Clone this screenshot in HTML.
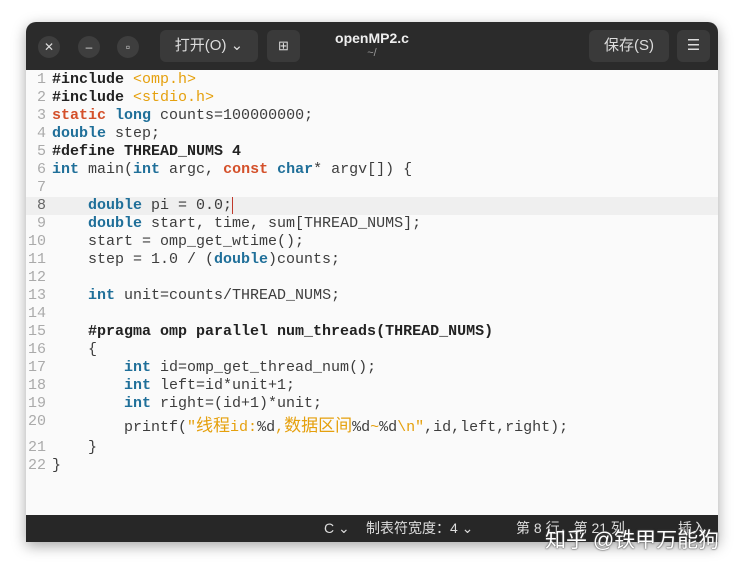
<!DOCTYPE html>
<html><head><meta charset="utf-8"><style>
body{margin:0;width:744px;height:571px;background:#fff;position:relative;overflow:hidden;font-family:"Liberation Sans","Noto Sans CJK SC",sans-serif}
.win{position:absolute;left:26px;top:22px;width:692px;height:520px;background:#fafafa;border-radius:10px 10px 0 0;overflow:hidden;box-shadow:0 4px 14px rgba(0,0,0,.35)}
.tb{position:absolute;left:0;top:0;width:692px;height:48px;background:#2b2b2b;color:#eee}
.cb{position:absolute;top:14px;width:22px;height:22px;border-radius:50%;background:#3e3e3e;color:#ddd;font-size:12px;text-align:center;line-height:22px}
.btn{position:absolute;top:8px;height:32px;background:#3a3a3a;border-radius:6px;color:#ddd;font-size:15px;line-height:32px;text-align:center}
.code{position:absolute;left:0;top:49px;width:692px;font-family:"Liberation Mono","Noto Sans CJK SC",monospace;font-size:15px;color:#3d3d3d}
.l{height:18px;line-height:18px;white-space:pre;position:relative}
.n{display:inline-block;width:20px;text-align:right;color:#aaa;margin-right:6px}
.pp{font-weight:bold;color:#222}.s{color:#e5a00d}.k{color:#d4502a;font-weight:bold}.t{color:#1f6f99;font-weight:bold}
.c{font-size:17px}
.sb{position:absolute;left:0;top:493px;width:692px;height:27px;background:#272727;color:#ddd;font-size:14px;line-height:27px}
</style></head><body>
<div class="win">
<div class="tb">
<div class="cb" style="left:12px">✕</div>
<div class="cb" style="left:52px">–</div>
<div class="cb" style="left:91px">▫</div>
<div class="btn" style="left:134px;width:98px">打开(O) ⌄</div>
<div class="btn" style="left:241px;width:33px;font-size:13px">⊞</div>
<div style="position:absolute;left:290px;width:112px;top:8px;text-align:center;font-weight:bold;font-size:14px;color:#eee">openMP2.c</div>
<div style="position:absolute;left:290px;width:112px;top:25px;text-align:center;font-size:11px;color:#999">~/</div>
<div class="btn" style="left:563px;width:80px">保存(S)</div>
<div class="btn" style="left:651px;width:33px">☰</div>
</div>
<div class="code">
<div class="l"><span class="n">1</span><span class="pp">#include</span> <span class="s">&lt;omp.h&gt;</span></div>
<div class="l"><span class="n">2</span><span class="pp">#include</span> <span class="s">&lt;stdio.h&gt;</span></div>
<div class="l"><span class="n">3</span><span class="k">static</span> <span class="t">long</span> counts=100000000;</div>
<div class="l"><span class="n">4</span><span class="t">double</span> step;</div>
<div class="l"><span class="n">5</span><span class="pp">#define THREAD_NUMS 4</span></div>
<div class="l"><span class="n">6</span><span class="t">int</span> main(<span class="t">int</span> argc, <span class="k">const</span> <span class="t">char</span>* argv[]) {</div>
<div class="l"><span class="n">7</span></div>
<div class="l" style="background:#efefef"><span class="n" style="color:#666">8</span>    <span class="t">double</span> pi = 0.0;<span style="border-left:1px solid #c0392b"></span></div>
<div class="l"><span class="n">9</span>    <span class="t">double</span> start, time, sum[THREAD_NUMS];</div>
<div class="l"><span class="n">10</span>    start = omp_get_wtime();</div>
<div class="l"><span class="n">11</span>    step = 1.0 / (<span class="t">double</span>)counts;</div>
<div class="l"><span class="n">12</span></div>
<div class="l"><span class="n">13</span>    <span class="t">int</span> unit=counts/THREAD_NUMS;</div>
<div class="l"><span class="n">14</span></div>
<div class="l"><span class="n">15</span>    <span class="pp">#pragma omp parallel num_threads(THREAD_NUMS)</span></div>
<div class="l"><span class="n">16</span>    {</div>
<div class="l"><span class="n">17</span>        <span class="t">int</span> id=omp_get_thread_num();</div>
<div class="l"><span class="n">18</span>        <span class="t">int</span> left=id*unit+1;</div>
<div class="l"><span class="n">19</span>        <span class="t">int</span> right=(id+1)*unit;</div>
<div class="l" style="height:26px"><span class="n" style="position:absolute;left:0;top:0">20</span><span style="position:absolute;left:26px;top:6px">        printf(<span class="s">"<span class="c">线程</span>id:</span>%d<span class="s">,<span class="c">数据区间</span></span>%d<span class="s">~</span>%d<span class="s">\n"</span>,id,left,right);</span></div>
<div class="l"><span class="n">21</span>    }</div>
<div class="l"><span class="n">22</span>}</div>
</div>
<div class="sb">
<span style="position:absolute;left:298px">C ⌄</span>
<span style="position:absolute;left:340px">制表符宽度：4 ⌄</span>
<span style="position:absolute;left:490px">第 8 行，第 21 列</span>
<span style="position:absolute;left:652px">插入</span>
</div>
</div>
<div style="position:absolute;left:545px;top:524px;font-size:21px;color:#fff;text-shadow:0 0 2px #555,0 0 1px #333">知乎 @铁甲万能狗</div>
</body></html>
